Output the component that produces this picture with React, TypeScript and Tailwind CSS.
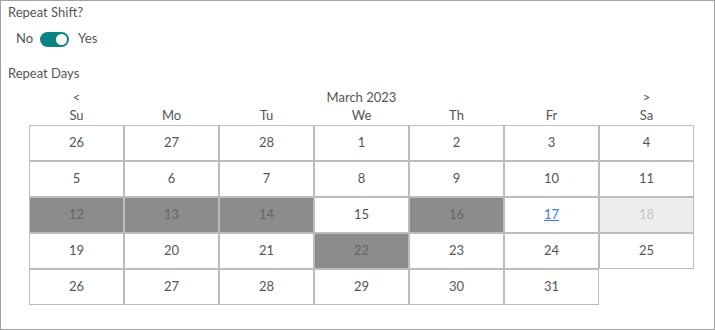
import React from "react";

type Day = { n: number; kind?: "gray" | "link" | "disabled" };

const weeks: Day[][] = [
  [{ n: 26 }, { n: 27 }, { n: 28 }, { n: 1 }, { n: 2 }, { n: 3 }, { n: 4 }],
  [{ n: 5 }, { n: 6 }, { n: 7 }, { n: 8 }, { n: 9 }, { n: 10 }, { n: 11 }],
  [
    { n: 12, kind: "gray" },
    { n: 13, kind: "gray" },
    { n: 14, kind: "gray" },
    { n: 15 },
    { n: 16, kind: "gray" },
    { n: 17, kind: "link" },
    { n: 18, kind: "disabled" },
  ],
  [{ n: 19 }, { n: 20 }, { n: 21 }, { n: 22, kind: "gray" }, { n: 23 }, { n: 24 }, { n: 25 }],
  [{ n: 26 }, { n: 27 }, { n: 28 }, { n: 29 }, { n: 30 }, { n: 31 }],
];

const dayNames = ["Su", "Mo", "Tu", "We", "Th", "Fr", "Sa"];

const cellClass = (kind?: Day["kind"]) => {
  if (kind === "gray") return "bg-[#8c8c8c] text-[#666]";
  if (kind === "disabled") return "bg-[#eeeeee] text-[#c4c4c4]";
  return "bg-white text-[#555]";
};

export default function App() {
  return (
    <div
      className="w-[715px] h-[330px] border border-[#a3a3a3] bg-white text-[13px] text-[#555]"
      style={{ fontFamily: "Lato, 'Noto Sans', sans-serif" }}
    >
      <div className="pl-[7px] pt-[2px] h-[18px] leading-[18px]">Repeat Shift?</div>

      {/* Toggle */}
      <div className="flex items-center mt-[12px] pl-[15px] h-[16px]">
        <span>No</span>
        <div className="ml-[7px] w-[29px] h-[15px] rounded-full bg-[#0e8383] flex items-center justify-end pr-[2px]">
          <div className="w-[11px] h-[11px] rounded-full bg-white" />
        </div>
        <span className="ml-[9px]">Yes</span>
      </div>

      <div className="pl-[7px] mt-[17px] h-[18px] leading-[18px]">Repeat Days</div>

      {/* Calendar */}
      <div className="ml-[28px] w-[665px] mt-[6px]">
        <div className="grid grid-cols-7 h-[18px] leading-[18px] text-[13px] text-center">
          <div>&lt;</div>
          <div className="col-span-5">March 2023</div>
          <div>&gt;</div>
        </div>
        <div className="grid grid-cols-7 h-[18px] leading-[18px] text-center">
          {dayNames.map((d) => (
            <div key={d}>{d}</div>
          ))}
        </div>
        <div className="grid grid-cols-7 mt-[1px]">
          {weeks.flat().map((d, i) => (
            <div
              key={i}
              className={`h-[36px] border border-[#bcbcbc] flex items-center justify-center text-[13px] ${cellClass(d.kind)}`}
            >
              {d.kind === "link" ? (
                <span className="text-[#3b7de0] underline">{d.n}</span>
              ) : (
                d.n
              )}
            </div>
          ))}
        </div>
      </div>
    </div>
  );
}
